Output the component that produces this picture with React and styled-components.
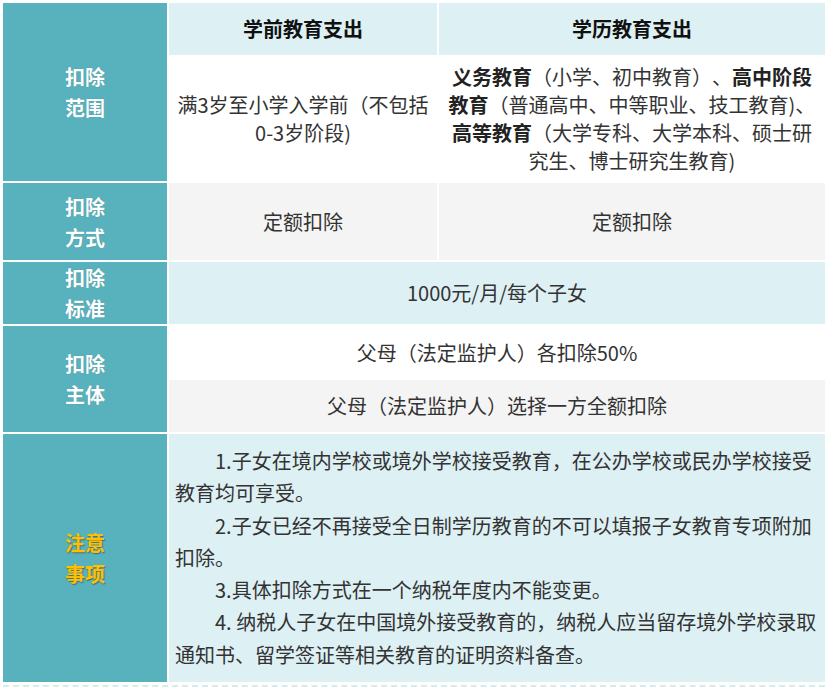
import styled, { createGlobalStyle } from 'styled-components';

const GlobalStyle = createGlobalStyle`
  html, body {
    margin: 0;
    padding: 0;
    background: #ffffff;
  }
  body {
    font-family: 'Noto Sans CJK SC', 'Microsoft YaHei', sans-serif;
    text-spacing-trim: space-all;
  }
`;

const Page = styled.div`
  width: 829px;
  padding: 3px 4px 0 3px;
  box-sizing: border-box;
`;

const Table = styled.div`
  display: grid;
  grid-template-columns: 164px 268px 386px;
  grid-template-rows: 52px 124px 77px 62px 52px 52px 248px;
  column-gap: 2px;
  row-gap: 2px;
  background: #ffffff;
`;

const Label = styled.div`
  grid-column: 1;
  grid-row: ${(p) => p.$row};
  background: #57b2bd;
  display: flex;
  flex-direction: column;
  align-items: center;
  justify-content: center;
  color: ${(p) => (p.$warn ? '#ffc000' : '#ffffff')};
  font-size: 20px;
  font-weight: 700;
  line-height: 31px;
  text-shadow: ${(p) =>
    p.$warn ? '1px 1px 1px rgba(60, 60, 60, 0.6)' : '0 0 1px rgba(0, 0, 0, 0.25)'};
`;

const Cell = styled.div`
  grid-column: ${(p) => p.$col};
  grid-row: ${(p) => p.$row};
  background: ${(p) => p.$bg};
  display: flex;
  align-items: center;
  justify-content: center;
  text-align: center;
  padding: 0 4px;
  color: #333333;
  font-size: 20px;
  line-height: 28px;
  margin-bottom: ${(p) => (p.$joined ? '-2px' : '0')};
`;

const Head = styled(Cell)`
  color: #111111;
  font-weight: 700;
`;

const Strong = styled.b`
  color: #222222;
  font-weight: 700;
`;

const Notes = styled.div`
  grid-column: 2 / 4;
  grid-row: 7;
  background: #ddf0f3;
  display: flex;
  flex-direction: column;
  justify-content: center;
  padding: 0 6px;
  color: #333333;
  font-size: 20px;
  line-height: 32.3px;
`;

const Note = styled.p`
  margin: 0;
  text-indent: 2em;
  text-align: left;
`;

const Dashes = styled.div`
  margin-top: 3px;
  border-top: 2px dashed #d3ecec;
`;

const WHITE = '#ffffff';
const GRAY = '#f4f4f4';
const CYAN = '#ddf0f3';

export default function App() {
  return (
    <Page>
      <GlobalStyle />
      <Table>
        <Label $row="1 / 3">
          <span>扣除</span>
          <span>范围</span>
        </Label>
        <Head $col="2" $row="1" $bg={CYAN}>学前教育支出</Head>
        <Head $col="3" $row="1" $bg={CYAN}>学历教育支出</Head>
        <Cell $col="2" $row="2" $bg={WHITE}>
          <div>
            满3岁至小学入学前（不包括
            <br />
            0-3岁阶段)
          </div>
        </Cell>
        <Cell $col="3" $row="2" $bg={WHITE}>
          <div>
            <Strong>义务教育</Strong>（小学、初中教育）、<Strong>高中阶段</Strong>
            <br />
            <Strong>教育</Strong>（普通高中、中等职业、技工教育)、
            <br />
            <Strong>高等教育</Strong>（大学专科、大学本科、硕士研
            <br />
            究生、博士研究生教育)
          </div>
        </Cell>

        <Label $row="3">
          <span>扣除</span>
          <span>方式</span>
        </Label>
        <Cell $col="2" $row="3" $bg={GRAY}>定额扣除</Cell>
        <Cell $col="3" $row="3" $bg={GRAY}>定额扣除</Cell>

        <Label $row="4">
          <span>扣除</span>
          <span>标准</span>
        </Label>
        <Cell $col="2 / 4" $row="4" $bg={CYAN}>1000元/月/每个子女</Cell>

        <Label $row="5 / 7">
          <span>扣除</span>
          <span>主体</span>
        </Label>
        <Cell $col="2 / 4" $row="5" $bg={WHITE} $joined>
          父母（法定监护人）各扣除50%
        </Cell>
        <Cell $col="2 / 4" $row="6" $bg={GRAY}>
          父母（法定监护人）选择一方全额扣除
        </Cell>

        <Label $row="7" $warn>
          <span>注意</span>
          <span>事项</span>
        </Label>
        <Notes>
          <Note>1.子女在境内学校或境外学校接受教育，在公办学校或民办学校接受教育均可享受。</Note>
          <Note>2.子女已经不再接受全日制学历教育的不可以填报子女教育专项附加扣除。</Note>
          <Note>3.具体扣除方式在一个纳税年度内不能变更。</Note>
          <Note>4. 纳税人子女在中国境外接受教育的，纳税人应当留存境外学校录取通知书、留学签证等相关教育的证明资料备查。</Note>
        </Notes>
      </Table>
      <Dashes />
    </Page>
  );
}
